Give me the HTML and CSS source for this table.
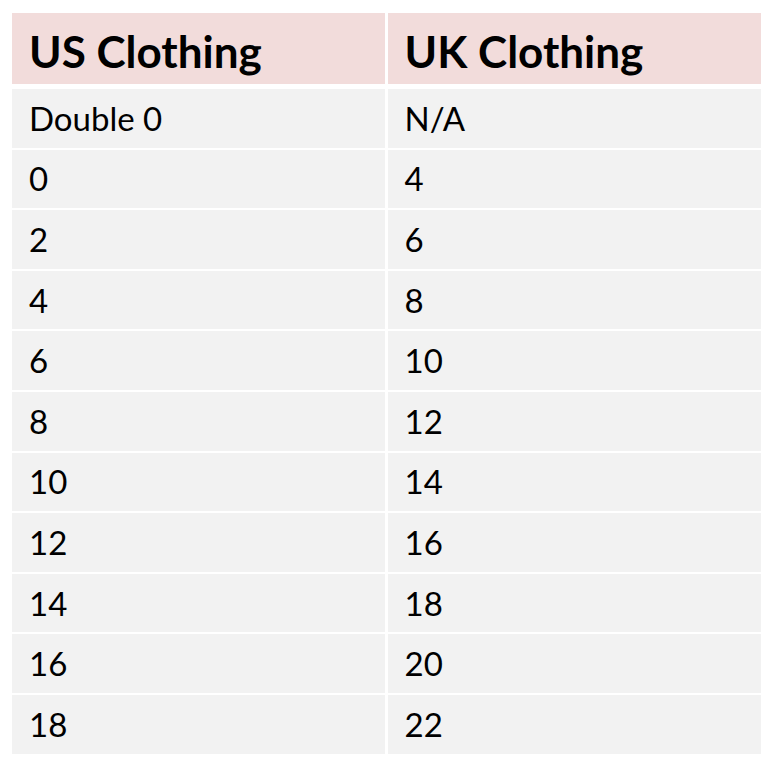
FILE: index.html
```html
<!DOCTYPE html>
<html>
<head>
<meta charset="utf-8">
<link rel="stylesheet" href="styles.css">
</head>
<body>
<div class="sizes">
  <div class="cell head">US Clothing</div>
  <div class="cell head">UK Clothing</div>
  <div class="cell">Double 0</div><div class="cell">N/A</div>
  <div class="cell">0</div><div class="cell">4</div>
  <div class="cell">2</div><div class="cell">6</div>
  <div class="cell">4</div><div class="cell">8</div>
  <div class="cell">6</div><div class="cell">10</div>
  <div class="cell">8</div><div class="cell">12</div>
  <div class="cell">10</div><div class="cell">14</div>
  <div class="cell">12</div><div class="cell">16</div>
  <div class="cell">14</div><div class="cell">18</div>
  <div class="cell">16</div><div class="cell">20</div>
  <div class="cell">18</div><div class="cell">22</div>
</div>
</body>
</html>
```

FILE: styles.css
```css
html, body {
  margin: 0;
  background: #ffffff;
}
body {
  padding: 13px 13px 0 12px;
  font-family: Lato, "Open Sans", "Liberation Sans", sans-serif;
  color: #000;
}
.sizes {
  display: grid;
  grid-template-columns: 373px 373px;
  grid-template-rows: 74px repeat(11, 58.6px);
  column-gap: 2.5px;
  row-gap: 2px;
}
.cell {
  background: #f2f2f2;
  display: flex;
  align-items: center;
  padding-left: 17px;
  font-size: 33px;
  line-height: 1;
}
.head {
  background: #f2dcdb;
  font-weight: 700;
  font-size: 44px;
  padding-top: 4px;
  margin-bottom: 3px;
  box-sizing: border-box;
}
```
